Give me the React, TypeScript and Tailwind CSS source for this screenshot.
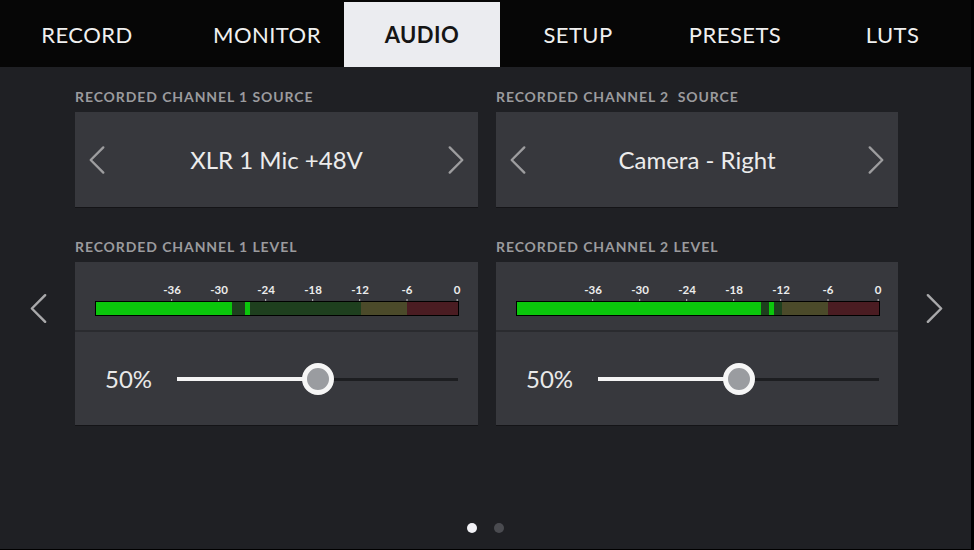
import React from "react";

const FONT = { fontFamily: "Lato, 'Noto Sans', sans-serif" };

function Chevron({ dir, className }: { dir: "left" | "right"; className?: string }) {
  return (
    <svg viewBox="0 0 20 32" className={className} fill="none">
      {dir === "left" ? (
        <path d="M17 2 L3 16 L17 30" stroke="currentColor" strokeWidth="2.6" strokeLinecap="round" strokeLinejoin="round" />
      ) : (
        <path d="M3 2 L17 16 L3 30" stroke="currentColor" strokeWidth="2.6" strokeLinecap="round" strokeLinejoin="round" />
      )}
    </svg>
  );
}

const ticks = [
  { label: "-36", x: 77 },
  { label: "-30", x: 124 },
  { label: "-24", x: 171 },
  { label: "-18", x: 218 },
  { label: "-12", x: 265 },
  { label: "-6", x: 312 },
  { label: "0", x: 362 },
];

type Seg = { w: number; c: string };

function Meter({ segs }: { segs: Seg[] }) {
  return (
    <div className="relative w-[364px]">
      <div className="relative h-[18px]">
        {ticks.map((t) => (
          <div key={t.label} className="absolute top-0 flex flex-col items-center" style={{ left: t.x, transform: "translateX(-50%)" }}>
            <span className="text-[11.5px] leading-[14px] font-bold text-[#ececec]">{t.label}</span>
            <span className="mt-[2px] h-[2px] w-[1px] bg-[#bdbdbd]" />
          </div>
        ))}
      </div>
      <div className="flex h-[15px] w-[364px] border border-black bg-black">
        {segs.map((s, i) => (
          <div key={i} className="h-full" style={{ width: s.w, backgroundColor: s.c }} />
        ))}
      </div>
    </div>
  );
}

const BRIGHT = "#0bc70c";
const DARK = "#1e3f1e";
const OLIVE = "#4b4a2a";
const RED = "#4a1c22";

function Slider({ pct }: { pct: number }) {
  const knobX = 141;
  return (
    <div className="flex items-center">
      <span className="w-[72px] pl-[30px] text-[24px] leading-none text-[#e9e9e9]">{pct}%</span>
      <div className="relative ml-[30px] h-[32px] w-[281px]">
        <div className="absolute left-0 right-0 top-[15px] h-[3px] bg-[#1d1e21]" />
        <div className="absolute left-0 top-[14.5px] h-[4px] bg-[#f4f4f4]" style={{ width: knobX }} />
        <div
          className="absolute top-0 h-[32px] w-[32px] rounded-full border-[5px] border-[#f6f6f6] bg-[#9a9ca0]"
          style={{ left: knobX - 16 }}
        />
      </div>
    </div>
  );
}

function Label({ children }: { children: React.ReactNode }) {
  return (
    <div className="mb-[7px] h-[16px] text-[14px] font-bold leading-[16px] tracking-[0.065em] text-[#9b9b9e] whitespace-pre">
      {children}
    </div>
  );
}

function SourceCard({ value }: { value: string }) {
  return (
    <div className="flex h-[95px] items-center justify-between bg-[#37383d] px-[13px] shadow-[0_1px_0_#141417] text-[#9d9d9f]">
      <Chevron dir="left" className="h-[32px] w-[18px]" />
      <span className="text-[24px] text-[#ececec]">{value}</span>
      <Chevron dir="right" className="h-[32px] w-[18px]" />
    </div>
  );
}

function LevelCard({ segs, pct }: { segs: Seg[]; pct: number }) {
  return (
    <div className="flex h-[163px] flex-col bg-[#37383d] shadow-[0_1px_0_#141417]">
      <div className="flex h-[68px] items-start pl-[20px] pt-[21px]">
        <Meter segs={segs} />
      </div>
      <div className="h-[2px] bg-[#2a2b2f]" />
      <div className="flex flex-1 items-center">
        <Slider pct={pct} />
      </div>
    </div>
  );
}

export default function App() {
  const tabs = [
    { name: "RECORD", cls: "w-[174px]" },
    { name: "MONITOR", cls: "w-[170px] pl-[16px]" },
    { name: "AUDIO", cls: "w-[156px]", active: true },
    { name: "SETUP", cls: "w-[156px]" },
    { name: "PRESETS", cls: "w-[158px]" },
    { name: "LUTS", cls: "flex-1" },
  ];
  const seg1: Seg[] = [
    { w: 136, c: BRIGHT },
    { w: 13, c: DARK },
    { w: 5, c: BRIGHT },
    { w: 111, c: DARK },
    { w: 46, c: OLIVE },
    { w: 51, c: RED },
  ];
  const seg2: Seg[] = [
    { w: 244, c: BRIGHT },
    { w: 8, c: DARK },
    { w: 5, c: BRIGHT },
    { w: 8, c: DARK },
    { w: 46, c: OLIVE },
    { w: 51, c: RED },
  ];
  return (
    <div className="flex h-[550px] w-[974px] flex-col overflow-hidden border-r-[3px] border-b-[1px] border-black bg-[#1f2024]" style={FONT}>
      <div className="flex h-[67px] shrink-0 bg-[#060606] pt-[2px]">
        {tabs.map((t) => (
          <div
            key={t.name}
            className={`${t.cls} flex items-center justify-center text-[22px] tracking-[0.02em] ${
              t.active ? "bg-[#ebecf0] font-bold text-[#151515]" : "text-[#f0f0f0]"
            }`}
          >
            {t.name}
          </div>
        ))}
      </div>
      <div className="flex flex-1">
        <div className="flex w-[75px] items-center justify-center text-[#a9a9ab]">
          <Chevron dir="left" className="ml-[1px] h-[31px] w-[19px]" />
        </div>
        <div className="flex w-[823px] flex-col pt-[22px] pb-[16px]">
          <div className="grid grid-cols-[403px_402px] gap-x-[18px]">
            <div>
              <Label>RECORDED CHANNEL 1 SOURCE</Label>
              <SourceCard value="XLR 1 Mic +48V" />
            </div>
            <div>
              <Label>RECORDED CHANNEL 2  SOURCE</Label>
              <SourceCard value="Camera - Right" />
            </div>
            <div className="mt-[32px]">
              <Label>RECORDED CHANNEL 1 LEVEL</Label>
              <LevelCard segs={seg1} pct={50} />
            </div>
            <div className="mt-[32px]">
              <Label>RECORDED CHANNEL 2 LEVEL</Label>
              <LevelCard segs={seg2} pct={50} />
            </div>
          </div>
          <div className="mt-auto flex justify-center gap-[17px] pr-[2px]">
            <span className="h-[10px] w-[10px] rounded-full bg-[#f2f2f6]" />
            <span className="h-[10px] w-[10px] rounded-full bg-[#4a4b50]" />
          </div>
        </div>
        <div className="flex flex-1 items-center justify-center text-[#a9a9ab]">
          <Chevron dir="right" className="h-[31px] w-[19px]" />
        </div>
      </div>
    </div>
  );
}
